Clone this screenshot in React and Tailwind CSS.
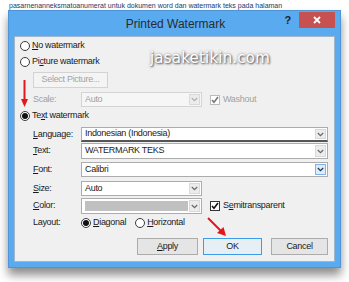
import React from 'react';

const Chevron = ({ color = '#6b6b6b' }) => (
  <svg width="7" height="5" viewBox="0 0 7 5">
    <path d="M0.8 1 L3.5 3.7 L6.2 1" fill="none" stroke={color} strokeWidth="1.3" />
  </svg>
);

const Radio = ({ checked }) => (
  <span className="flex h-[10px] w-[10px] shrink-0 items-center justify-center rounded-full border border-[#3c3c3c] bg-white">
    {checked && <span className="h-[6px] w-[6px] rounded-full bg-[#111]" />}
  </span>
);

const Check = ({ disabled }) => (
  <span
    className={`flex h-[10px] w-[10px] shrink-0 items-center justify-center border bg-white ${
      disabled ? 'border-[#bcbcbc]' : 'border-[#333]'
    }`}
  >
    <svg width="8" height="8" viewBox="0 0 8 8">
      <path d="M1 4 L3 6.3 L7 1" fill="none" stroke={disabled ? '#777' : '#111'} strokeWidth="1.6" />
    </svg>
  </span>
);

const Combo = ({ w, children, disabled, focus, dark }) => (
  <div
    className={`flex h-full ${w} border ${
      disabled ? 'border-[#d4d4d4] bg-[#f6f6f6]' : 'border-[#acacac] bg-white'
    } ${dark ? 'border-b-2 border-b-[#555]' : ''}`}
  >
    <div className={`flex flex-1 items-center overflow-hidden pl-[3px] ${disabled ? 'text-[#a0a0a0]' : ''}`}>
      {children}
    </div>
    <div
      className={`m-[1px] flex w-[11px] items-center justify-center border ${
        focus ? 'border-[#7eb4ea] bg-[#dcecfc]' : 'border-[#d9d9d9] bg-[#ececec]'
      }`}
    >
      <Chevron color={focus ? '#1e3a5a' : disabled ? '#b0b0b0' : '#6b6b6b'} />
    </div>
  </div>
);

const Label = ({ k, rest, disabled }) => (
  <span className={`w-[48px] shrink-0 ${disabled ? 'text-[#a0a0a0]' : ''}`}>
    {k && <span className="underline underline-offset-1">{k}</span>}
    {rest}
  </span>
);

const Btn = ({ w, children, primary }) => (
  <div
    className={`flex h-full ${w} items-center justify-center border ${
      primary ? 'border-[#3d9be9] bg-[#e6eef6]' : 'border-[#acacac] bg-[#e5e5e5]'
    }`}
  >
    {children}
  </div>
);

export default function App() {
  return (
    <div
      className="relative h-[282px] w-[349px] overflow-hidden bg-white text-[9px] tracking-[-0.3px] text-[#1a1a1a]"
      style={{ fontFamily: '"Liberation Sans", Arial, sans-serif' }}
    >
      {/* text strip from the page behind */}
      <div className="flex h-[10px] items-end whitespace-nowrap pl-[9px] text-[7px] leading-[8px] tracking-normal text-[#223a66]">
        <span>pasarnenanneksmatoanumerat untuk dokumen word dan watermark teks pada halaman</span>
      </div>

      {/* dialog */}
      <div className="ml-[8px] flex h-[258px] w-[333px] flex-col border border-[#4d95d6] bg-[#5aaaf0] shadow-[0_7px_9px_rgba(0,0,0,0.45)]">
        <div className="relative flex h-[25px] shrink-0 items-center justify-center">
          <span className="pl-[2px] text-[12px] tracking-normal text-[#2b2b2b]">Printed Watermark</span>
          <div className="absolute right-[5px] top-[1px] flex items-center">
            <span className="mr-[8px] text-[11px] font-bold text-[#222]">?</span>
            <div className="flex h-[16px] w-[36px] items-center justify-center bg-[#c75050]">
              <svg width="8" height="8" viewBox="0 0 8 8">
                <path d="M1 1 L7 7 M7 1 L1 7" stroke="#fff" strokeWidth="1.8" />
              </svg>
            </div>
          </div>
        </div>

        <div className="mx-[5px] flex h-[226px] flex-col border border-[#9fb6cc] bg-[#f0f0f0] pl-[5px]">
          <div className="mt-[2px] flex h-[14px] items-center gap-[2px]">
            <Radio />
            <span>
              <span className="underline underline-offset-1">N</span>o watermark
            </span>
          </div>
          <div className="mt-[2px] flex h-[14px] items-center gap-[2px]">
            <Radio />
            <span>
              Pi<span className="underline underline-offset-1">c</span>ture watermark
            </span>
          </div>
          <div className="ml-[13px] mt-[3px] flex h-[16px] w-[75px] items-center justify-center border border-[#d3d3d3] bg-[#f4f4f4] text-[#a3a3a3]">
            Select Picture...
          </div>
          <div className="mt-[4px] flex h-[15px] items-center pl-[13px]">
            <Label rest="Scale:" disabled />
            <Combo w="w-[121px]" disabled>
              Auto
            </Combo>
            <div className="ml-[8px] flex items-center gap-[3px] text-[#a0a0a0]">
              <Check disabled />
              <span>Washout</span>
            </div>
          </div>
          <div className="mt-[2px] flex h-[14px] items-center gap-[2px]">
            <Radio checked />
            <span>
              Te<span className="underline underline-offset-1">x</span>t watermark
            </span>
          </div>
          <div className="mt-[4px] flex h-[15px] items-center pl-[13px]">
            <Label k="L" rest="anguage:" />
            <Combo w="w-[247px]" dark>
              Indonesian (Indonesia)
            </Combo>
          </div>
          <div className="mt-[1px] flex h-[16px] items-center pl-[13px]">
            <Label k="T" rest="ext:" />
            <Combo w="w-[247px]">WATERMARK TEKS</Combo>
          </div>
          <div className="mt-[3px] flex h-[15px] items-center pl-[13px]">
            <Label k="F" rest="ont:" />
            <Combo w="w-[247px]" focus>
              Calibri
            </Combo>
          </div>
          <div className="mt-[4px] flex h-[15px] items-center pl-[13px]">
            <Label k="S" rest="ize:" />
            <Combo w="w-[121px]">Auto</Combo>
          </div>
          <div className="mt-[2px] flex h-[16px] items-center pl-[13px]">
            <Label k="C" rest="olor:" />
            <Combo w="w-[121px]">
              <span className="h-[10px] w-[104px] bg-[#c0c0c0]" />
            </Combo>
            <div className="ml-[8px] flex items-center gap-[3px]">
              <Check />
              <span>
                S<span className="underline underline-offset-1">e</span>mitransparent
              </span>
            </div>
          </div>
          <div className="mt-[2px] flex h-[14px] items-center pl-[13px]">
            <Label rest="Layout:" />
            <div className="flex items-center gap-[2px]">
              <Radio checked />
              <span>
                <span className="underline underline-offset-1">D</span>iagonal
              </span>
            </div>
            <div className="ml-[9px] flex items-center gap-[2px]">
              <Radio />
              <span>
                <span className="underline underline-offset-1">H</span>orizontal
              </span>
            </div>
          </div>
          <div className="mt-[8px] flex h-[17px] items-center pl-[117px]">
            <Btn w="w-[61px]">
              <span>
                <span className="underline underline-offset-1">A</span>pply
              </span>
            </Btn>
            <div className="ml-[5px] flex h-full">
              <Btn w="w-[59px]" primary>
                OK
              </Btn>
            </div>
            <div className="ml-[9px] flex h-full">
              <Btn w="w-[57px]">Cancel</Btn>
            </div>
          </div>
        </div>
      </div>

      {/* site watermark over the dialog */}
      <div
        className="absolute left-[150px] top-[47px] text-[15px] tracking-[0.2px] text-white [text-shadow:1px_1px_2px_rgba(0,0,0,0.65),0_0_3px_rgba(0,0,0,0.4)]"
        style={{ fontFamily: '"DejaVu Sans", Verdana, sans-serif' }}
      >
        jasaketikin.com
      </div>

      {/* red annotation arrows */}
      <svg className="pointer-events-none absolute left-0 top-0" width="349" height="282">
        <path d="M24.5 80 L24.5 100" stroke="#e3161b" strokeWidth="2" />
        <path d="M21 99 L24.5 107 L28 99 Z" fill="#e3161b" />
        <path d="M208 218 L221 231" stroke="#e3161b" strokeWidth="2" />
        <path d="M217 233 L226 236 L223.5 227 Z" fill="#e3161b" />
      </svg>
    </div>
  );
}
